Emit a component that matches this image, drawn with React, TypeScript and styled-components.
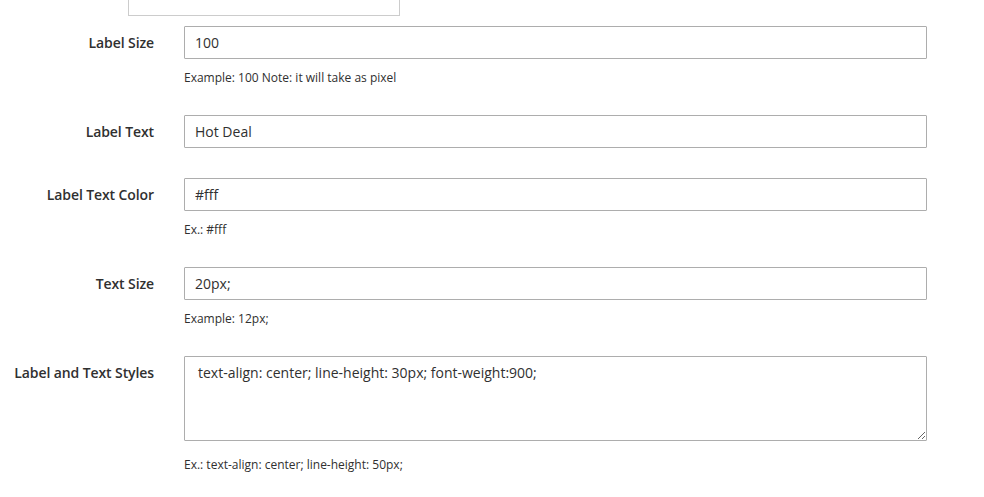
import React from "react";
import styled, { createGlobalStyle } from "styled-components";

const GlobalStyle = createGlobalStyle`
  html, body {
    margin: 0;
    padding: 0;
    background: #ffffff;
  }

  body {
    font-family: "Open Sans", "Liberation Sans", sans-serif;
    color: #303030;
  }
`;

interface FieldProps {
  label: string;
  value: string;
  note?: string;
  multiline?: boolean;
}

function Field({ label, value, note, multiline }: FieldProps) {
  return (
    <Row>
      <Label>{label}</Label>
      <Control>
        {multiline ? (
          <TextArea defaultValue={value} />
        ) : (
          <TextInput type="text" defaultValue={value} />
        )}
        {note && <Note>{note}</Note>}
      </Control>
    </Row>
  );
}

function App() {
  return (
    <>
      <GlobalStyle />
      <Page>
        <PreviewBox />
        <Fieldset>
          <Field label="Label Size" value="100" note="Example: 100 Note: it will take as pixel" />
          <Field label="Label Text" value="Hot Deal" />
          <Field label="Label Text Color" value="#fff" note="Ex.: #fff" />
          <Field label="Text Size" value="20px;" note="Example: 12px;" />
          <Field
            label="Label and Text Styles"
            value="text-align: center; line-height: 30px; font-weight:900;"
            note="Ex.: text-align: center; line-height: 50px;"
            multiline
          />
        </Fieldset>
      </Page>
    </>
  );
}

export default App;

const Page = styled.div`
  width: 984px;
  min-height: 497px;
  padding-right: 57px;
  box-sizing: border-box;
`;

/* bottom of the field that sits above the visible area */
const PreviewBox = styled.div`
  margin-left: 128px;
  width: 272px;
  height: 16px;
  box-sizing: border-box;
  border: 1px solid #cccccc;
  border-top: none;
`;

const Fieldset = styled.div`
  display: flex;
  flex-direction: column;
  gap: 30px;
  padding-top: 10px;
`;

const Row = styled.div`
  display: grid;
  grid-template-columns: 154px 1fr;
  column-gap: 30px;
  align-items: start;
`;

const Label = styled.label`
  text-align: right;
  font-size: 14px;
  font-weight: 600;
  line-height: 33px;
  letter-spacing: -0.1px;
  color: #303030;
  white-space: nowrap;
`;

const Control = styled.div`
  display: flex;
  flex-direction: column;
`;

const TextInput = styled.input`
  height: 33px;
  box-sizing: border-box;
  width: 100%;
  margin: 0;
  padding: 0 10px;
  border: 1px solid #adadad;
  border-radius: 1px;
  background: #ffffff;
  font-family: "Open Sans", "Liberation Sans", sans-serif;
  font-size: 14px;
  color: #303030;
  outline: none;
`;

const TextArea = styled.textarea`
  height: 85px;
  box-sizing: border-box;
  width: 100%;
  margin: 0 0 5px;
  padding: 7px 13px;
  border: 1px solid #adadad;
  border-radius: 1px;
  background: #ffffff;
  font-family: "Open Sans", "Liberation Sans", sans-serif;
  font-size: 14px;
  line-height: 18px;
  color: #303030;
  outline: none;
  display: block;
`;

const Note = styled.div`
  margin-top: 12px;
  font-size: 12px;
  line-height: 14px;
  color: #303030;
`;
